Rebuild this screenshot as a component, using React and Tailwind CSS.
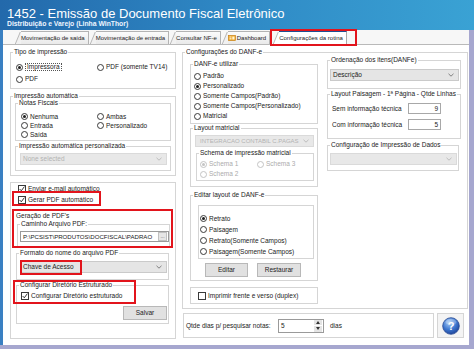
import React from "react";

function Group({ title, className = "", children }) {
  return (
    <fieldset className={`border border-[#d5d5d5] p-0 m-0 min-w-0 ${className}`}>
      {title && (
        <legend className="ml-[2px] px-[1px] leading-[8px]">{title}</legend>
      )}
      {children}
    </fieldset>
  );
}

function Radio({ label, checked, disabled, focus }) {
  return (
    <div className={`flex items-center h-full ${disabled ? "text-[#ababab]" : ""}`}>
      <span
        className={`w-[7px] h-[7px] rounded-full border bg-white flex items-center justify-center ${
          disabled ? "border-[#c4c4c4]" : "border-[#3a3a3a]"
        }`}
      >
        {checked && (
          <span
            className={`w-[3px] h-[3px] rounded-full ${
              disabled ? "bg-[#c4c4c4]" : "bg-[#1e1e1e]"
            }`}
          />
        )}
      </span>
      <span
        className={`ml-[2px] ${
          focus ? "border border-dotted border-[#555] px-[1px] leading-[6px]" : ""
        }`}
      >
        {label}
      </span>
    </div>
  );
}

function Check({ label, checked }) {
  return (
    <div className="flex items-center h-full">
      <span className="w-[8px] h-[8px] border border-[#3a3a3a] bg-white flex items-center justify-center">
        {checked && (
          <svg width="6" height="6" viewBox="0 0 6 6">
            <path
              d="M0.6 3 L2.3 4.8 L5.4 0.6"
              fill="none"
              stroke="#222"
              strokeWidth="0.9"
            />
          </svg>
        )}
      </span>
      <span className="ml-[2px]">{label}</span>
    </div>
  );
}

function Chevron({ color = "#666" }) {
  return (
    <svg width="6" height="4" viewBox="0 0 6 4" className="mr-[4px] shrink-0">
      <path d="M0.5 0.8 L3 3.2 L5.5 0.8" fill="none" stroke={color} strokeWidth="0.8" />
    </svg>
  );
}

function Select({ value, disabled, className = "", children }) {
  return (
    <div
      className={`relative flex items-center h-[12px] border ${
        disabled
          ? "border-[#dadada] bg-[#e8e8e8] text-[#b3b3b3]"
          : "border-[#cacaca] bg-[#e5e5e5] text-[#222]"
      } ${className}`}
    >
      <span className="flex-1 pl-[2px] whitespace-nowrap overflow-hidden">{value}</span>
      <Chevron color={disabled ? "#b0b0b0" : "#666"} />
      {children}
    </div>
  );
}

function Button({ label, className = "" }) {
  return (
    <div
      className={`h-[14px] flex items-center justify-center border border-[#b8b8b8] bg-[#e1e1e1] ${className}`}
    >
      {label}
    </div>
  );
}

function Tab({ label, icon, active }) {
  return (
    <div className="flex items-end h-[13px] mr-[1px]">
      <svg width="6" height="13" viewBox="0 0 6 13" className="shrink-0">
        <polygon points="0,13 5,1 6,1 6,13" fill={active ? "#ffffff" : "#f1f1f1"} />
        <line x1="0.3" y1="13" x2="5.3" y2="1" stroke="#a9a9a9" strokeWidth="0.8" />
      </svg>
      <div
        className={`h-[13px] flex items-center border-t border-r pr-[3px] text-[6px] ${
          active
            ? "bg-white border-t-[#1f4f92] border-r-[#a9a9a9]"
            : "bg-gradient-to-b from-[#fbfbfb] to-[#e9e9e9] border-[#b3b3b3]"
        }`}
      >
        {icon}
        <span className="whitespace-nowrap">{label}</span>
      </div>
    </div>
  );
}

function Red({ className = "" }) {
  return (
    <span
      className={`pointer-events-none absolute border-2 border-[#e2141c] ${className}`}
    />
  );
}

function HelpIcon() {
  return (
    <svg width="18" height="18" viewBox="0 0 18 18">
      <defs>
        <radialGradient id="hg" cx="0.4" cy="0.3" r="0.75">
          <stop offset="0" stopColor="#a9cdf6" />
          <stop offset="0.55" stopColor="#3f78d0" />
          <stop offset="1" stopColor="#1b3f95" />
        </radialGradient>
      </defs>
      <circle cx="9" cy="9" r="8.3" fill="url(#hg)" stroke="#2a4a92" strokeWidth="0.8" />
      <ellipse cx="9" cy="5" rx="5.5" ry="3" fill="#ffffff" opacity="0.25" />
      <text
        x="9"
        y="13"
        textAnchor="middle"
        fontSize="11"
        fontWeight="bold"
        fill="#ffffff"
        fontFamily="Liberation Sans, Arial, sans-serif"
      >
        ?
      </text>
    </svg>
  );
}

export default function App() {
  const dashIcon = (
    <svg width="8" height="6" viewBox="0 0 8 6" className="mr-[1px] shrink-0">
      <rect x="0.4" y="0.4" width="7.2" height="5.2" fill="#f0a623" stroke="#c27b10" strokeWidth="0.6" />
      <rect x="1.5" y="1.5" width="2" height="1" fill="#fff4d6" />
      <rect x="4.3" y="1.5" width="2.2" height="3" fill="#fff4d6" />
      <rect x="1.5" y="3.2" width="2" height="1.2" fill="#fff4d6" />
    </svg>
  );

  return (
    <div className="w-[474px] h-[349px] overflow-hidden bg-[#a6a7cf] flex flex-col font-['Liberation_Sans',Arial,sans-serif] text-[6.5px] leading-[8px] text-[#222]">
      {/* title bar */}
      <div className="h-[30px] shrink-0 bg-gradient-to-r from-[#2369ab] via-[#2f89c5] to-[#3aa2d4] pl-[7px] pt-[7px] text-white">
        <div className="text-[13px] leading-[13px]">
          1452 - Emissão de Documento Fiscal Eletrônico
        </div>
        <div className="text-[6.8px] leading-[8px] font-bold text-[#eef5ff]">
          Distribuição e Varejo (Linha WinThor)
        </div>
      </div>

      <div className="flex h-[315px] shrink-0">
        <div className="w-[3px] bg-[#3a80c2]" />
        <div className="w-[466px] bg-white flex flex-col">
          {/* tabs */}
          <div className="h-[14px] shrink-0 flex items-end pl-[12px] bg-[#f7f7f7]">
            <Tab label="Movimentação de saída" />
            <Tab label="Movimentação de entrada" />
            <Tab label="Consultar NF-e" />
            <Tab label="Dashboard" icon={dashIcon} />
            <div className="relative ml-[2px]">
              <Tab label="Configurações da rotina" active />
              <Red className="-left-[3px] -top-[2px] w-[87px] h-[17px]" />
            </div>
          </div>

          {/* panel */}
          <div className="flex-1 flex border-t border-[#b9b9b9] pl-[7px] pt-[3px] pr-[1px]">
            {/* left column */}
            <div className="w-[166px] shrink-0 flex flex-col">
              <Group title="Tipo de impressão" className="h-[41px]">
                <div className="pt-[6px] pl-[5px] grid grid-cols-[81px_1fr] gap-y-[2px]">
                  <div className="h-[10px]">
                    <Radio label="Impressora" checked focus />
                  </div>
                  <div className="h-[10px]">
                    <Radio label="PDF (somente TV14)" />
                  </div>
                  <div className="h-[10px]">
                    <Radio label="PDF" />
                  </div>
                </div>
              </Group>

              <Group title="Impressão automática" className="mt-[3px] h-[84px]">
                <div className="pl-[4px]">
                  <Group title="Notas Fiscais" className="-mt-px w-[156px] h-[42px]">
                    <div className="pt-[5px] pl-[5px] grid grid-cols-[76px_1fr]">
                      <div className="h-[9px]"><Radio label="Nenhuma" checked /></div>
                      <div className="h-[9px]"><Radio label="Ambas" /></div>
                      <div className="h-[9px]"><Radio label="Entrada" /></div>
                      <div className="h-[9px]"><Radio label="Personalizado" /></div>
                      <div className="h-[9px]"><Radio label="Saída" /></div>
                    </div>
                  </Group>
                  <Group
                    title="Impressão automática personalizada"
                    className="mt-[1px] w-[156px] h-[29px]"
                  >
                    <div className="pt-[3px] pl-[4px] pr-[3px]">
                      <Select value="None selected" disabled />
                    </div>
                  </Group>
                </div>
              </Group>

              <Group className="mt-[6px] h-[157px]">
                <div className="pt-[2px] pl-[7px] h-[10px]">
                  <Check label="Enviar e-mail automático" checked />
                </div>
                <div className="relative mt-[2px] ml-[1px] w-[89px] h-[10px] pl-[6px]">
                  <Check label="Gerar PDF automático" checked />
                  <Red className="left-0 -top-[4px] w-[89px] h-[15px]" />
                </div>

                <div className="relative mt-[4px] ml-[1px] w-[161px] h-[39px]">
                  <div className="pt-[3px] pl-[4px] h-[11px]">Geração de PDF's</div>
                  <Group title="Caminho Arquivo PDF:" className="ml-[5px] w-[153px] h-[27px]">
                    <div className="mt-[3px] pl-[2px]">
                      <div className="h-[11px] flex items-center border border-[#9a9a9a] bg-white">
                        <span className="flex-1 pl-[2px] whitespace-nowrap overflow-hidden text-[6.1px]">
                          P:\PCSIST\PRODUTOS\DOCFISCAL\PADRAO
                        </span>
                        <span className="w-[9px] h-[9px] mr-px border border-[#c0c0c0] bg-[#e6e6e6] flex items-center justify-center text-[5px] leading-[5px] text-[#555]">
                          ...
                        </span>
                      </div>
                    </div>
                  </Group>
                  <Red className="inset-0" />
                </div>

                <Group
                  title="Formato do nome do arquivo PDF"
                  className="ml-[5px] mt-[1px] w-[153px] h-[31px]"
                >
                  <div className="mt-[4px] pl-[3px] pr-[1px]">
                    <Select value="Chave de Acesso">
                      <Red className="-left-[1px] -top-[2px] w-[62px] h-[15px]" />
                    </Select>
                  </div>
                </Group>

                <div className="relative ml-[5px] mt-[1px] w-[153px]">
                  <Group title="Configurar Diretório Estruturado" className="h-[43px]">
                    <div className="mt-[2px] pl-[4px] h-[10px]">
                      <Check label="Configurar Diretório estruturado" checked />
                    </div>
                    <div className="mt-[5px] pr-[1px] flex justify-end">
                      <Button label="Salvar" className="w-[44px]" />
                    </div>
                  </Group>
                  <Red className="-left-[3px] -top-[1px] w-[123px] h-[24px]" />
                </div>
              </Group>
            </div>

            {/* right part */}
            <div className="ml-[6px] w-[286px] shrink-0 flex flex-col">
              <Group title="Configurações do DANF-e" className="h-[261px]">
                <div className="flex items-start pl-[7px]">
                  {/* middle column */}
                  <div className="w-[128px] shrink-0 mt-[4px] flex flex-col">
                    <Group title="DANF-e utilizar" className="h-[64px]">
                      <div className="pt-[3px] pl-[3px]">
                        <div className="h-[10px]"><Radio label="Padrão" /></div>
                        <div className="h-[10px]"><Radio label="Personalizado" checked /></div>
                        <div className="h-[10px]"><Radio label="Somente Campos(Padrão)" /></div>
                        <div className="h-[10px]"><Radio label="Somente Campos(Personalizado)" /></div>
                        <div className="h-[10px]"><Radio label="Matricial" /></div>
                      </div>
                    </Group>

                    <Group title="Layout matricial" className="h-[63px]">
                      <div className="pt-[3px] pl-[4px] pr-[3px]">
                        <Select value={<span className="pl-[2px] text-[6px]">INTEGRACAO CONTABIL C.PAGAS</span>} disabled />
                        <Group
                          title="Schema de impressão matricial"
                          className="mt-[2px] ml-px h-[32px]"
                        >
                          <div className="pt-[2px] pl-[3px] grid grid-cols-[57px_1fr]">
                            <div className="h-[10px]"><Radio label="Schema 1" checked disabled /></div>
                            <div className="h-[10px]"><Radio label="Schema 3" disabled /></div>
                            <div className="h-[10px]"><Radio label="Schema 2" disabled /></div>
                          </div>
                        </Group>
                      </div>
                    </Group>

                    <Group title="Editar layout de DANF-e" className="mt-[4px] h-[90px]">
                      <div className="mt-[6px] ml-[7px] mr-[3px] h-[54px] border border-[#d5d5d5] pt-[7px] pl-[1px]">
                        <div className="h-[11px]"><Radio label="Retrato" checked /></div>
                        <div className="h-[11px]"><Radio label="Paisagem" /></div>
                        <div className="h-[11px]"><Radio label="Retrato(Somente Campos)" /></div>
                        <div className="h-[11px]"><Radio label="Paisagem(Somente Campos)" /></div>
                      </div>
                      <div className="mt-[4px] ml-[14px] flex gap-[9px]">
                        <Button label="Editar" className="w-[43px]" />
                        <Button label="Restaurar" className="w-[44px]" />
                      </div>
                    </Group>

                    <div className="mt-[6px] h-[17px] border border-[#d5d5d5] pl-[7px]">
                      <Check label="Imprimir frente e verso (duplex)" />
                    </div>
                  </div>

                  {/* right column */}
                  <div className="ml-[9px] w-[134px] shrink-0 flex flex-col">
                    <Group title="Ordenação dos itens(DANFe)" className="h-[33px]">
                      <div className="pt-[5px] pl-[2px] pr-[1px]">
                        <Select value="Descrição" />
                      </div>
                    </Group>

                    <Group
                      title="Layout Paisagem - 1ª Página - Qtde Linhas"
                      className="mt-[1px] h-[49px]"
                    >
                      <div className="pt-[5px] pl-[4px] grid grid-cols-[76px_33px] gap-y-[5px]">
                        <div className="h-[11px] flex items-center">Sem informação técnica</div>
                        <div className="h-[11px] flex items-center justify-end pr-[2px] border border-[#a8a8a8] bg-white">9</div>
                        <div className="h-[11px] flex items-center">Com informação técnica</div>
                        <div className="h-[11px] flex items-center justify-end pr-[2px] border border-[#a8a8a8] bg-white">5</div>
                      </div>
                    </Group>

                    <Group
                      title="Configuração de Impressão de Dados"
                      className="mt-[2px] mr-[2px] h-[30px]"
                    >
                      <div className="pt-[4px] pl-[2px] pr-[1px]">
                        <Select value="" disabled />
                      </div>
                    </Group>
                  </div>
                </div>
              </Group>

              <div className="mt-[4px] flex h-[25px]">
                <div className="ml-px w-[251px] border border-[#d5d5d5] flex items-center pl-[2px]">
                  <span className="w-[92px] whitespace-nowrap">Qtde dias p/ pesquisar notas:</span>
                  <div className="w-[46px] h-[14px] flex items-center border border-[#9a9a9a] bg-white">
                    <span className="flex-1 pl-[2px]">5</span>
                    <div className="w-[8px] h-[12px] mr-px flex flex-col gap-px">
                      <div className="flex-1 bg-[#e4e4e4] flex items-center justify-center">
                        <svg width="4" height="3" viewBox="0 0 4 3"><polygon points="0,3 2,0 4,3" fill="#333" /></svg>
                      </div>
                      <div className="flex-1 bg-[#e4e4e4] flex items-center justify-center">
                        <svg width="4" height="3" viewBox="0 0 4 3"><polygon points="0,0 4,0 2,3" fill="#333" /></svg>
                      </div>
                    </div>
                  </div>
                  <span className="ml-[6px]">dias</span>
                </div>
                <div className="ml-[3px] w-[27px] border border-[#d5d5d5] bg-[#f4f4f4] flex items-center justify-center">
                  <HelpIcon />
                </div>
              </div>
            </div>
          </div>
        </div>
        <div className="flex-1 bg-[#a6a7cf]" />
      </div>
      <div className="flex-1 bg-[#a6a7cf]" />
    </div>
  );
}
